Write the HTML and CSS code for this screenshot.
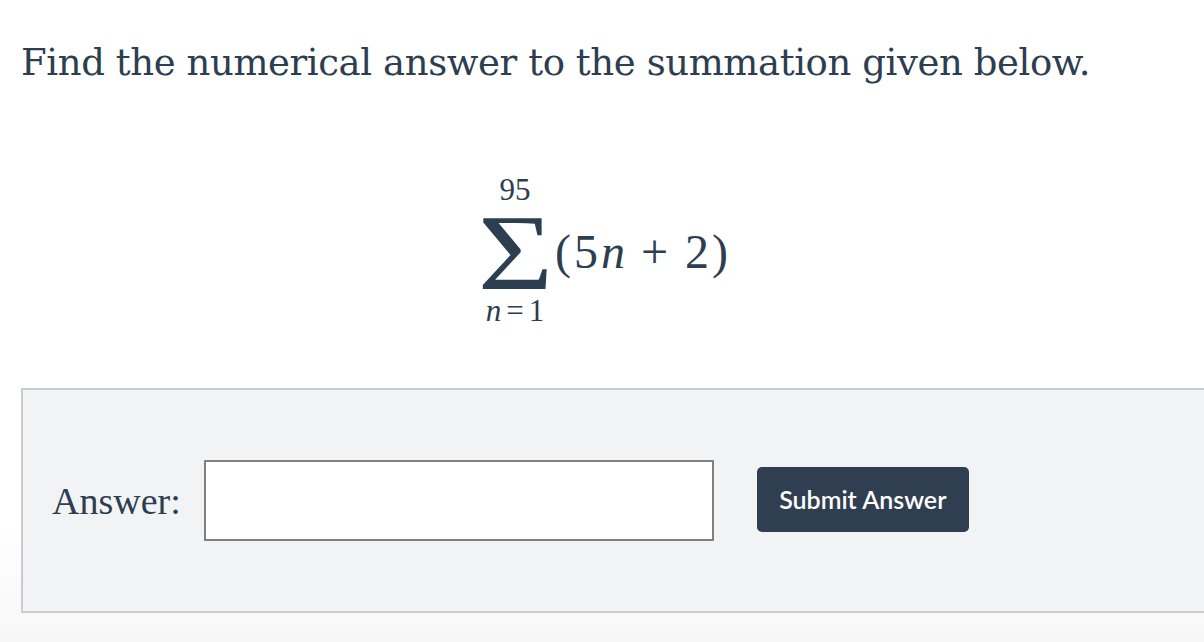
FILE: index.html
```html
<!DOCTYPE html>
<html lang="en">
<head>
<meta charset="utf-8">
<title>Summation</title>
<link rel="stylesheet" href="styles.css">
</head>
<body>
<main class="page">
  <h1 class="prompt">Find the numerical answer to the summation given below.</h1>
  <div class="math">
    <div class="sum">
      <span class="upper">95</span>
      <span class="sigma"><span class="sigma-glyph">Σ</span></span>
      <span class="lower"><i class="var">n</i><span class="eq">=</span>1</span>
    </div>
    <div class="expr">(5<i class="var">n</i><span class="op">+</span>2)</div>
  </div>
  <form class="panel" onsubmit="return false">
    <label class="label" for="answer">Answer:</label>
    <input class="answer" id="answer" type="text">
    <button class="submit" type="button">Submit Answer</button>
  </form>
</main>
</body>
</html>
```

FILE: styles.css
```css
html, body {
  margin: 0;
  padding: 0;
}
body {
  width: 1204px;
  height: 642px;
  overflow: hidden;
  background: linear-gradient(to bottom, #ffffff 0, #ffffff 520px, #f7f7f7 642px);
  color: #2c3e50;
}
.page {
  padding-left: 21px;
}
.prompt {
  margin: 0;
  padding-top: 44px;
  font-family: "DejaVu Serif", serif;
  font-weight: normal;
  font-size: 37px;
  line-height: 37px;
  letter-spacing: -0.4px;
  color: #2c3e50;
  white-space: nowrap;
}
.math {
  display: flex;
  justify-content: center;
  align-items: center;
  margin-top: 93px;
  padding-right: 13px;
  font-family: "Liberation Serif", "DejaVu Serif", serif;
  color: #2c3e50;
}
.sum {
  display: flex;
  flex-direction: column;
  align-items: center;
  width: 68px;
}
.upper, .lower {
  display: block;
  font-size: 31px;
  line-height: 31px;
  white-space: nowrap;
}
.eq {
  margin: 0 5px;
}
.sigma {
  display: block;
  margin: 10px 0 6px;
  height: 74px;
  width: 68px;
  font-size: 108px;
  line-height: 74px;
  text-align: center;
}
.sigma-glyph {
  display: inline-block;
  transform: translateY(1px) scaleX(1.2);
}
.expr {
  margin-left: 6px;
  padding-top: 4px;
  font-size: 48px;
  line-height: 48px;
  letter-spacing: 3px;
  white-space: nowrap;
}
.var {
  font-style: italic;
}
.op {
  margin: 0 14px 0 13px;
}
.panel {
  display: flex;
  align-items: center;
  margin: 62px -20px 0 0;
  height: 221px;
  padding-left: 29px;
  background: #f2f3f5;
  border: 2px solid #c9ccd1;
  border-right: none;
}
.label {
  font-family: "Liberation Serif", serif;
  font-size: 38px;
  color: #2c3e50;
}
.answer {
  box-sizing: border-box;
  width: 510px;
  height: 81px;
  margin-left: 23px;
  border: 2px solid #808080;
  background: #ffffff;
  font-size: 24px;
  padding: 0 10px;
  outline: none;
}
.submit {
  box-sizing: border-box;
  width: 212px;
  height: 65px;
  margin-left: 43px;
  margin-top: -3px;
  border: none;
  border-radius: 5px;
  background: #2f3e50;
  color: #ffffff;
  font-family: Lato, "Open Sans", sans-serif;
  font-weight: 600;
  font-size: 25px;
  cursor: pointer;
}
```
